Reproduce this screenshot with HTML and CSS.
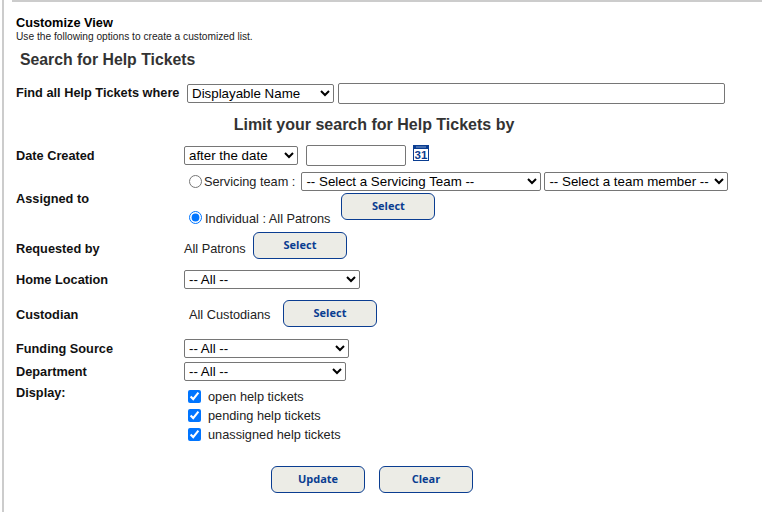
FILE: index.html
```html
<!DOCTYPE html>
<html lang="en">
<head>
    <meta charset="UTF-8">
    <title>Customize View</title>
    <link rel="stylesheet" href="styles.css">
</head>
<body>

<div class="page">
    <div class="top-line"></div>
    <h3 class="view-title">Customize View</h3>
    <p class="view-note">Use the following options to create a customized list.</p>
    <h2 class="search-title">Search for Help Tickets</h2>

    <div class="find-row">
        <label class="find-label">Find all Help Tickets where</label>
        <select class="find-select"><option>Displayable Name</option></select>
        <input type="text" class="find-input">
    </div>

    <h2 class="limit-title">Limit your search for Help Tickets by</h2>

    <div class="row date-row">
        <label class="row-label">Date Created</label>
        <select class="date-select"><option>after the date</option></select>
        <input type="text" class="date-input">
        <svg class="cal-icon" width="16" height="16" viewBox="0 0 16 16">
            <rect x="0" y="0" width="16" height="16" fill="#0a3d91"/>
            <rect x="1" y="4" width="14" height="11" fill="#fff"/>
            <rect x="3" y="1.5" width="10" height="1" fill="#7f9dcc"/>
            <text x="8" y="14" text-anchor="middle" font-family="Liberation Sans" font-weight="bold" font-size="11.5" fill="#0a3d91">31</text>
        </svg>
    </div>

    <div class="row assigned-row">
        <label class="row-label">Assigned to</label>
        <div class="assigned-options">
            <div class="team-line">
                <input type="radio" name="assigned" class="radio">
                <span class="team-text">Servicing team :</span>
                <select class="team-select"><option>-- Select a Servicing Team --</option></select>
                <select class="member-select"><option>-- Select a team member --</option></select>
            </div>
            <div class="individual-line">
                <input type="radio" name="assigned" class="radio" checked>
                <span class="individual-text">Individual : All Patrons</span>
                <button class="btn individual-btn">Select</button>
            </div>
        </div>
    </div>

    <div class="row requested-row">
        <label class="row-label">Requested by</label>
        <span class="patrons-text">All Patrons</span>
        <button class="btn">Select</button>
    </div>

    <div class="row home-row">
        <label class="row-label">Home Location</label>
        <select class="home-select"><option>-- All --</option></select>
    </div>

    <div class="row custodian-row">
        <label class="row-label">Custodian</label>
        <span class="custodian-text">All Custodians</span>
        <button class="btn">Select</button>
    </div>

    <div class="row funding-row">
        <label class="row-label">Funding Source</label>
        <select class="funding-select"><option>-- All --</option></select>
    </div>

    <div class="row department-row">
        <label class="row-label">Department</label>
        <select class="department-select"><option>-- All --</option></select>
    </div>

    <div class="display-row">
        <label class="row-label">Display:</label>
        <div class="display-options">
            <div class="check-line"><input type="checkbox" checked><span>open help tickets</span></div>
            <div class="check-line"><input type="checkbox" checked><span>pending help tickets</span></div>
            <div class="check-line"><input type="checkbox" checked><span>unassigned help tickets</span></div>
        </div>
    </div>

    <div class="actions">
        <button class="btn">Update</button>
        <button class="btn">Clear</button>
    </div>
</div>

</body>
</html>
```

FILE: styles.css
```css
html, body {
    margin: 0;
    padding: 0;
    background: #fff;
}
body {
    font-family: "Liberation Sans", Arial, sans-serif;
    font-size: 12.75px;
    color: #222;
    overflow: hidden;
}
.page {
    box-sizing: border-box;
    width: 760px;
    height: 512px;
    margin-left: 2px;
    padding-left: 12px;
    border-left: 2px solid #ccc;
    overflow: hidden;
}
.top-line {
    height: 2px;
    margin: 0 0 0 -4px;
    background: #ccc;
}
.view-title {
    margin: 13px 0 0;
    font-size: 12.75px;
    line-height: 15px;
    color: #000;
}
.view-note {
    margin: 1px 0 0;
    font-size: 10.2px;
    line-height: 11px;
}
.search-title {
    margin: 9px 0 0 4px;
    font-size: 15.8px;
    line-height: 18px;
    color: #333;
}
.find-row {
    display: flex;
    align-items: center;
    height: 21px;
    margin-top: 14px;
}
.find-label {
    width: 171px;
    margin-bottom: 2px;
    font-weight: bold;
    color: #111;
}
select, input[type="text"] {
    box-sizing: border-box;
    font-family: "Liberation Sans", Arial, sans-serif;
    font-size: 13.33px;
    background: #fff;
    color: #000;
}
select {
    height: 19px;
    margin: 0;
    padding: 0;
    border: 1px solid #767676;
    border-radius: 2px;
}
input[type="text"] {
    height: 21px;
    border: 1px solid #767676;
    border-radius: 2px;
}
.find-select {
    width: 147px;
}
.find-input {
    width: 387px;
    margin: 0 0 0 4px;
}
.limit-title {
    margin: 12px 0 0;
    width: 716px;
    text-align: center;
    font-size: 16px;
    line-height: 18px;
    color: #333;
}
.row {
    display: flex;
    align-items: center;
}
.row-label {
    flex: 0 0 168px;
    font-weight: bold;
    color: #111;
}
.date-row {
    height: 21px;
    margin-top: 11px;
}
.date-select {
    width: 114px;
}
.date-input {
    width: 100px;
    margin: 0 0 0 8px;
}
.cal-icon {
    margin: -6px 0 0 7px;
}
.assigned-row {
    height: 54px;
    margin-top: 6px;
}
.assigned-row .row-label {
    margin-bottom: 2px;
}
.assigned-options {
    display: flex;
    flex-direction: column;
}
.radio {
    width: 13px;
    height: 13px;
    margin: 0;
    flex: none;
}
.team-line {
    display: flex;
    align-items: center;
    height: 19px;
    padding-left: 5px;
}
.team-text {
    margin-left: 2px;
}
.team-select {
    width: 240px;
    margin-left: 6px;
}
.member-select {
    width: 184px;
    margin-left: 3px;
}
.individual-line {
    display: flex;
    align-items: flex-end;
    height: 33px;
    margin-top: 2px;
    padding-left: 5px;
}
.individual-line .radio {
    margin-bottom: 2px;
}
.individual-text {
    margin: 0 0 0 3px;
}
.btn {
    box-sizing: border-box;
    width: 94px;
    height: 27px;
    padding: 0 0 2px;
    border: 1px solid #0a3d91;
    border-radius: 6px;
    background: #ecece6;
    color: #0a3d91;
    font-family: "Open Sans", sans-serif;
    font-size: 11px;
    font-weight: bold;
}
.individual-btn {
    align-self: flex-start;
    margin-left: 11px;
}
.requested-row {
    height: 27px;
    margin-top: 6px;
}
.requested-row .row-label, .patrons-text {
    margin-top: 6px;
}
.patrons-text {
    width: 69px;
}
.home-row {
    height: 19px;
    margin-top: 11px;
}
.home-select {
    width: 176px;
}
.custodian-row {
    height: 27px;
    margin-top: 11px;
}
.custodian-row .row-label, .custodian-text {
    margin-top: 2px;
}
.custodian-text {
    width: 94px;
    padding-left: 5px;
}
.funding-row {
    height: 19px;
    margin-top: 12px;
}
.funding-select {
    width: 165px;
}
.department-row {
    height: 19px;
    margin-top: 4px;
}
.department-select {
    width: 162px;
}
.display-row {
    display: flex;
    margin-top: 5px;
}
.display-row .row-label {
    margin-top: -1px;
}
.display-options {
    display: flex;
    flex-direction: column;
    gap: 5px;
    margin-top: 3px;
    padding-left: 4px;
}
.check-line {
    display: flex;
    align-items: center;
    height: 14px;
}
.check-line input {
    width: 13px;
    height: 13px;
    margin: 0 7px 0 0;
    accent-color: #0075ff;
}
.actions {
    display: flex;
    gap: 14px;
    margin: 25px 0 0 255px;
}
```
